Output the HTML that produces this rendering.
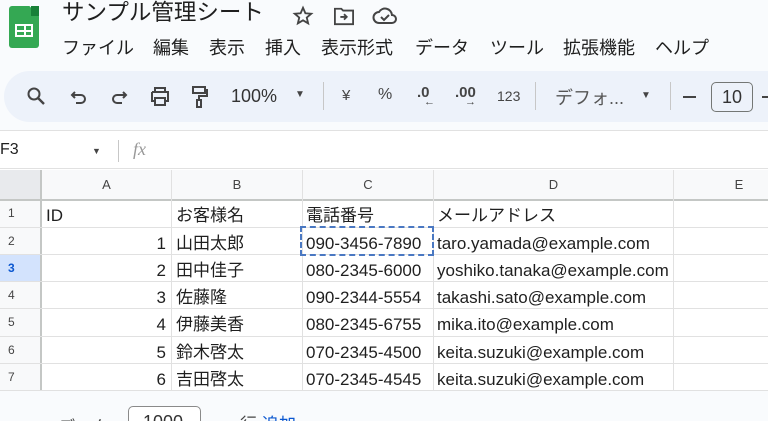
<!DOCTYPE html>
<html style="width:768px;height:421px;overflow:hidden"><head><meta charset="utf-8"><style>
*{margin:0;padding:0;box-sizing:border-box}
body{width:768px;height:421px;overflow:hidden;background:#f9fbfd;font-family:"Liberation Sans","Noto Sans CJK JP",sans-serif;color:#1f1f1f;position:relative}
.a{position:absolute;white-space:nowrap}
.grid{position:absolute;left:0;top:169px;width:768px;height:222px;background:#fff}
.hl{position:absolute;background:#e1e1e1}
.ct{position:absolute;font-size:17px;line-height:27px;white-space:nowrap;margin-top:2px}
.rh{position:absolute;left:0;width:40px;font-size:12px;color:#444;padding-left:8px;line-height:27px}
.ch{position:absolute;top:170px;height:29px;line-height:29px;text-align:center;font-size:13px;color:#444}
.m{position:absolute;top:36px;font-size:18px;line-height:24px;white-space:nowrap}
svg{position:absolute}
</style></head><body>
<!-- logo -->
<div class="a" style="left:9px;top:6px;width:30px;height:42px;background:#34a853;border-radius:3px;clip-path:polygon(0 0,68% 0,100% 24%,100% 100%,0 100%)"></div>
<div class="a" style="left:31px;top:6px;width:8px;height:10px;background:#188038"></div>
<div class="a" style="left:15px;top:24px;width:18px;height:13px;border:2px solid #fff;background:linear-gradient(#fff,#fff) 0 4px/100% 2px no-repeat,linear-gradient(#fff,#fff) 7px 0/2px 100% no-repeat"></div>
<div class="a" style="left:62px;top:-1px;font-size:22.5px;line-height:28px">サンプル管理シート</div>
<svg style="left:292px;top:5px" width="22" height="22" viewBox="0 0 24 24"><path d="M12 3l2.6 6 6.4.5-4.9 4.2 1.5 6.3L12 16.7 6.4 20l1.5-6.3L3 9.5 9.4 9z" fill="none" stroke="#444" stroke-width="2"/></svg>
<svg style="left:333px;top:6px" width="22" height="20" viewBox="0 0 24 22"><path d="M2 3h7l2 2h11v15H2z" fill="none" stroke="#444" stroke-width="2"/><path d="M8 12h7m-3-3l3 3-3 3" fill="none" stroke="#444" stroke-width="2"/></svg>
<svg style="left:372px;top:6px" width="26" height="20" viewBox="0 0 26 20"><path d="M7 17h13a4 4 0 0 0 0-8A7 7 0 0 0 7 6 5.5 5.5 0 0 0 7 17z" fill="none" stroke="#444" stroke-width="2"/><path d="M9 11l3 3 5-5" fill="none" stroke="#444" stroke-width="2"/></svg>
<div class="m" style="left:62px">ファイル</div>
<div class="m" style="left:153px">編集</div>
<div class="m" style="left:209px">表示</div>
<div class="m" style="left:265px">挿入</div>
<div class="m" style="left:321px">表示形式</div>
<div class="m" style="left:415px">データ</div>
<div class="m" style="left:490px">ツール</div>
<div class="m" style="left:563px">拡張機能</div>
<div class="m" style="left:655px">ヘルプ</div>
<!-- toolbar -->
<div class="a" style="left:4px;top:71px;width:800px;height:51px;background:#edf2fa;border-radius:26px"></div>
<svg style="left:26px;top:86px" width="20" height="20" viewBox="0 0 20 20"><circle cx="8" cy="8" r="5.5" fill="none" stroke="#444" stroke-width="2"/><path d="M12 12l6 6" stroke="#444" stroke-width="2.4"/></svg>
<svg style="left:70px;top:88px" width="18" height="18" viewBox="0 0 18 18"><path d="M5 4L2 7l3 3M2 7h9a4 4 0 0 1 0 8H6" fill="none" stroke="#444" stroke-width="2"/></svg>
<svg style="left:110px;top:88px" width="18" height="18" viewBox="0 0 18 18"><path d="M13 4l3 3-3 3M16 7H7a4 4 0 0 0 0 8h5" fill="none" stroke="#444" stroke-width="2"/></svg>
<svg style="left:149px;top:86px" width="22" height="20" viewBox="0 0 22 20"><path d="M6 6V2h10v4M3 6h16v9h-3M6 15H3V6M6 12h10v7H6z" fill="none" stroke="#444" stroke-width="2"/></svg>
<svg style="left:190px;top:85px" width="18" height="24" viewBox="0 0 18 24"><path d="M3 2h12v6H3zM15 5h2v6H9v4M7 15h4v7H7z" fill="none" stroke="#444" stroke-width="2"/></svg>
<div class="a" style="left:231px;top:86px;font-size:18px;color:#333">100%</div>
<div class="a" style="left:295px;top:89px;font-size:10px;color:#444">▼</div>
<div class="a" style="left:323px;top:82px;width:1px;height:28px;background:#c7c7c7"></div>
<div class="a" style="left:342px;top:87px;font-size:15px;color:#444">¥</div>
<div class="a" style="left:378px;top:86px;font-size:16px;color:#444">%</div>
<div class="a" style="left:417px;top:84px;font-size:15px;color:#444;font-weight:bold">.0</div>
<div class="a" style="left:424px;top:96px;font-size:11px;color:#444">←</div>
<div class="a" style="left:455px;top:84px;font-size:15px;color:#444;font-weight:bold">.00</div>
<div class="a" style="left:465px;top:96px;font-size:11px;color:#444">→</div>
<div class="a" style="left:497px;top:88px;font-size:14px;color:#444">123</div>
<div class="a" style="left:535px;top:82px;width:1px;height:28px;background:#c7c7c7"></div>
<div class="a" style="left:555px;top:84px;font-size:18px;color:#555">デフォ...</div>
<div class="a" style="left:641px;top:90px;font-size:10px;color:#444">▼</div>
<div class="a" style="left:670px;top:82px;width:1px;height:28px;background:#c7c7c7"></div>
<div class="a" style="left:683px;top:96px;width:13px;height:2px;background:#444"></div>
<div class="a" style="left:711px;top:82px;width:42px;height:30px;border:1px solid #747775;border-radius:5px;font-size:18px;text-align:center;line-height:28px;color:#333">10</div>
<div class="a" style="left:762px;top:96px;width:8px;height:2px;background:#444"></div>
<!-- formula bar -->
<div class="a" style="left:0;top:130px;width:768px;height:39px;background:#fff;border-top:1px solid #e1e1e1;border-bottom:1px solid #e1e1e1"></div>
<div class="a" style="left:0;top:141px;font-size:16px">F3</div>
<div class="a" style="left:92px;top:146px;font-size:9px;color:#444">▼</div>
<div class="a" style="left:118px;top:140px;width:1px;height:22px;background:#c7c7c7"></div>
<div class="a" style="left:133px;top:139px;font-size:18px;font-style:italic;font-family:'Liberation Serif',serif;color:#999">fx</div>
<!-- grid -->
<div class="grid"></div>
<div class="a" style="left:0;top:170px;width:768px;height:29px;background:#f8f9fa"></div>
<div class="a" style="left:0;top:170px;width:40px;height:221px;background:#f8f9fa"></div>
<div class="a" style="left:0;top:170px;width:40px;height:29px;background:#e8eaed"></div>
<div class="a" style="left:0;top:254px;width:40px;height:27px;background:#d3e3fd"></div>
<div class="hl" style="left:0;top:199px;width:768px;height:2px;background:#c4c7c5"></div>
<div class="hl" style="left:40px;top:170px;width:2px;height:221px;background:#c4c7c5"></div>
<div class="hl" style="left:0;top:227px;width:768px;height:1px"></div>
<div class="hl" style="left:0;top:254px;width:768px;height:1px"></div>
<div class="hl" style="left:0;top:281px;width:768px;height:1px"></div>
<div class="hl" style="left:0;top:308px;width:768px;height:1px"></div>
<div class="hl" style="left:0;top:336px;width:768px;height:1px"></div>
<div class="hl" style="left:0;top:363px;width:768px;height:1px"></div>
<div class="hl" style="left:0;top:390px;width:768px;height:1px"></div>
<div class="hl" style="left:171px;top:170px;width:1px;height:221px"></div>
<div class="hl" style="left:302px;top:170px;width:1px;height:221px"></div>
<div class="hl" style="left:433px;top:170px;width:1px;height:221px"></div>
<div class="hl" style="left:673px;top:170px;width:1px;height:221px"></div>
<div class="ch" style="left:42px;width:129px">A</div>
<div class="ch" style="left:172px;width:130px">B</div>
<div class="ch" style="left:303px;width:130px">C</div>
<div class="ch" style="left:434px;width:239px">D</div>
<div class="ch" style="left:674px;width:130px">E</div>
<div class="rh" style="top:200px">1</div><div class="rh" style="top:228px">2</div><div class="rh" style="top:255px;color:#0b57d0;font-weight:bold">3</div><div class="rh" style="top:282px">4</div><div class="rh" style="top:309px">5</div><div class="rh" style="top:337px">6</div><div class="rh" style="top:364px">7</div>
<div class="ct" style="left:46px;top:200px">ID</div>
<div class="ct" style="left:176px;top:200px">お客様名</div>
<div class="ct" style="left:306px;top:200px">電話番号</div>
<div class="ct" style="left:437px;top:200px">メールアドレス</div>
<div class="ct" style="left:42px;width:124px;text-align:right;top:228px">1</div>
<div class="ct" style="left:42px;width:124px;text-align:right;top:255px">2</div>
<div class="ct" style="left:42px;width:124px;text-align:right;top:282px">3</div>
<div class="ct" style="left:42px;width:124px;text-align:right;top:309px">4</div>
<div class="ct" style="left:42px;width:124px;text-align:right;top:337px">5</div>
<div class="ct" style="left:42px;width:124px;text-align:right;top:364px">6</div>
<div class="ct" style="left:176px;top:228px">山田太郎</div>
<div class="ct" style="left:176px;top:255px">田中佳子</div>
<div class="ct" style="left:176px;top:282px">佐藤隆</div>
<div class="ct" style="left:176px;top:309px">伊藤美香</div>
<div class="ct" style="left:176px;top:337px">鈴木啓太</div>
<div class="ct" style="left:176px;top:364px">吉田啓太</div>
<div class="ct" style="left:306px;top:228px">090-3456-7890</div>
<div class="ct" style="left:306px;top:255px">080-2345-6000</div>
<div class="ct" style="left:306px;top:282px">090-2344-5554</div>
<div class="ct" style="left:306px;top:309px">080-2345-6755</div>
<div class="ct" style="left:306px;top:337px">070-2345-4500</div>
<div class="ct" style="left:306px;top:364px">070-2345-4545</div>
<div class="ct" style="left:437px;top:228px">taro.yamada@example.com</div>
<div class="ct" style="left:437px;top:255px">yoshiko.tanaka@example.com</div>
<div class="ct" style="left:437px;top:282px">takashi.sato@example.com</div>
<div class="ct" style="left:437px;top:309px">mika.ito@example.com</div>
<div class="ct" style="left:437px;top:337px">keita.suzuki@example.com</div>
<div class="ct" style="left:437px;top:364px">keita.suzuki@example.com</div>
<div class="a" style="left:300px;top:226px;width:134px;height:30px;border:2px dashed #4a78c2"></div>
<!-- bottom -->
<div class="a" style="left:0;top:391px;width:768px;height:30px;background:#f9fbfd;overflow:hidden">
<div class="a" style="left:58px;top:22px;font-size:17px;color:#444">データ</div>
<div class="a" style="left:128px;top:15px;width:73px;height:30px;border:1px solid #8a8a8a;border-radius:5px;background:#fff;font-size:18px;padding:5px 0 0 14px;color:#333">1000</div>
<div class="a" style="left:240px;top:19px;font-size:17px;color:#444">行</div>
<div class="a" style="left:262px;top:19px;font-size:17px;color:#0b57d0">追加</div>
</div>
</body></html>
